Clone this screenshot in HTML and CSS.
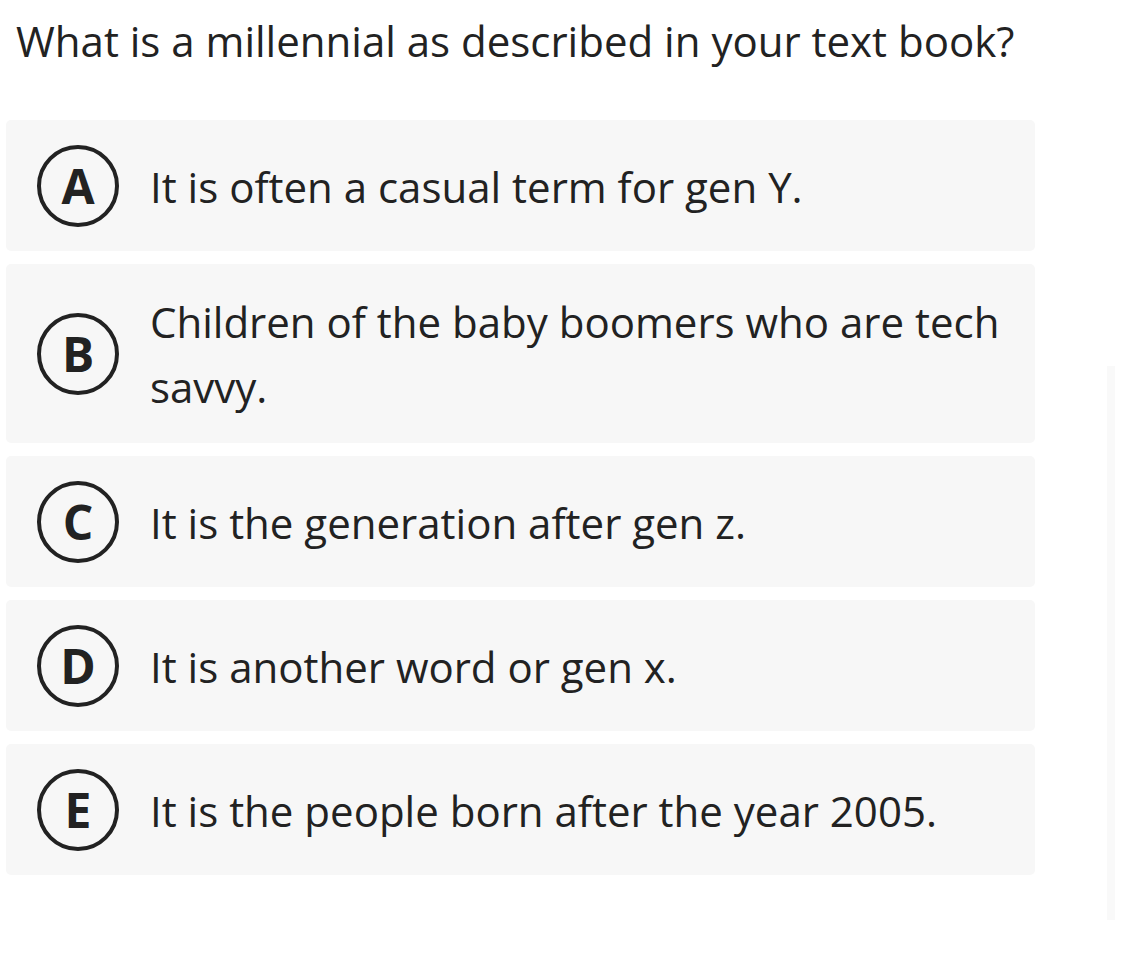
FILE: index.html
```html
<!DOCTYPE html>
<html lang="en">
<head>
<meta charset="utf-8">
<title>Question</title>
<link rel="stylesheet" href="styles.css">
</head>
<body>
<div class="page">
  <h1 class="question">What is a millennial as described in your text book?</h1>
  <div class="options">
    <div class="option">
      <div class="badge">A</div>
      <div class="label">It is often a casual term for gen Y.</div>
    </div>
    <div class="option">
      <div class="badge">B</div>
      <div class="label">Children of the baby boomers who are tech savvy.</div>
    </div>
    <div class="option">
      <div class="badge">C</div>
      <div class="label">It is the generation after gen z.</div>
    </div>
    <div class="option">
      <div class="badge">D</div>
      <div class="label">It is another word or gen x.</div>
    </div>
    <div class="option">
      <div class="badge">E</div>
      <div class="label">It is the people born after the year 2005.</div>
    </div>
  </div>
  <div class="scroll-track"></div>
</div>
</body>
</html>
```

FILE: styles.css
```css
html, body {
  margin: 0;
  padding: 0;
  background: #ffffff;
}

body {
  font-family: "Open Sans", "Noto Sans", sans-serif;
  color: #222222;
}

.page {
  position: relative;
  width: 1125px;
  height: 972px;
  overflow: hidden;
}

.question {
  margin: 0;
  padding: 13px 16px 0 16px;
  height: 120px;
  box-sizing: border-box;
  font-size: 42px;
  font-weight: 400;
  line-height: 56px;
  letter-spacing: 0;
}

.options {
  display: flex;
  flex-direction: column;
  gap: 13px;
  margin-left: 6px;
  width: 1029px;
}

.option {
  display: flex;
  align-items: center;
  padding: 25px 20px 24px 31px;
  background: #f7f7f7;
  border-radius: 5px;
}

.badge {
  flex: none;
  width: 82px;
  height: 82px;
  box-sizing: border-box;
  border: 4.5px solid #222222;
  border-radius: 50%;
  display: flex;
  align-items: center;
  justify-content: center;
  font-size: 48px;
  font-weight: 700;
  line-height: 1;
}

.label {
  margin-left: 31px;
  font-size: 42px;
  line-height: 65px;
}

.scroll-track {
  position: absolute;
  left: 1107px;
  top: 366px;
  width: 8px;
  height: 554px;
  background: #f9f9f9;
}
```
